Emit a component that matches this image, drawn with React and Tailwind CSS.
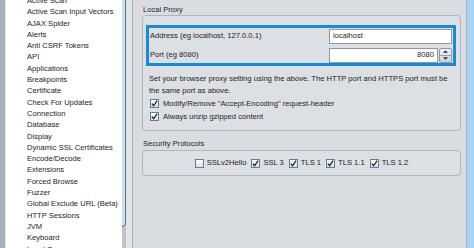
import React from "react";

const items = [
  "Active Scan",
  "Active Scan Input Vectors",
  "AJAX Spider",
  "Alerts",
  "Anti CSRF Tokens",
  "API",
  "Applications",
  "Breakpoints",
  "Certificate",
  "Check For Updates",
  "Connection",
  "Database",
  "Display",
  "Dynamic SSL Certificates",
  "Encode/Decode",
  "Extensions",
  "Forced Browse",
  "Fuzzer",
  "Global Exclude URL (Beta)",
  "HTTP Sessions",
  "JVM",
  "Keyboard",
  "Local Servers",
];

function Check({ on }) {
  return (
    <span className="w-[9px] h-[9px] border border-[#6f7b89] bg-linear-to-b from-[#ffffff] to-[#d9e0e8] flex items-center justify-center shrink-0">
      {on && (
        <svg viewBox="0 0 8 8" className="w-[7px] h-[7px]">
          <path d="M1 4.2 L3 6.6 L7 0.8" stroke="#10244a" strokeWidth="1.5" fill="none" />
        </svg>
      )}
    </span>
  );
}

function Spinner() {
  return (
    <div className="w-[13px] h-[15px] ml-[1px] border border-[#8e98a4] rounded-[2px] flex flex-col bg-linear-to-b from-[#f4f6f8] to-[#c9d0d8]">
      <div className="flex-1 flex items-center justify-center border-b border-[#9aa3ad]">
        <svg viewBox="0 0 6 3" className="w-[5px] h-[3px]"><path d="M0 3 L3 0 L6 3Z" fill="#2a3440" /></svg>
      </div>
      <div className="flex-1 flex items-center justify-center">
        <svg viewBox="0 0 6 3" className="w-[5px] h-[3px]"><path d="M0 0 L3 3 L6 0Z" fill="#2a3440" /></svg>
      </div>
    </div>
  );
}

export default function App() {
  return (
    <div className="w-[474px] h-[248px] overflow-hidden flex bg-[#d9dce1] text-[#1e1e1e] text-[7.6px] font-['Liberation_Sans',Arial,sans-serif]">
      {/* tree */}
      <div className="w-[6px] bg-[#a7b1bb] border-r border-[#e8ebee]" />
      <div className="w-[116px] bg-white overflow-hidden">
        <ul className="-mt-[5px] pl-[21px]">
          {items.map((t) => (
            <li key={t} className="leading-[11.3px] whitespace-nowrap">{t}</li>
          ))}
        </ul>
      </div>
      <div className="w-[4px] flex flex-col">
        <div className="h-[227px] bg-[#cfe1f0] border-r border-b border-[#5f7284] rounded-br-[4px]" />
        <div className="flex-1 bg-[#bfc4ca]" />
      </div>
      <div className="w-[7px] bg-[#e0e3e7] border-r border-[#a6acb3]" />

      {/* options panel */}
      <div className="flex-1 flex flex-col pl-[9px] pr-[4px] pt-[4px]">
        <div className="leading-[11px] pl-[1px]">Local Proxy</div>
        <div className="border border-[#b1b6bc] rounded-[4px] bg-[#dcdfe3] pt-[9px] pl-[3px] pr-[4px] pb-[9px]">
          <div className="border-[3px] border-[#1a8ad3] flex flex-col gap-[3px] pr-[1px]">
            <div className="h-[16px] flex items-center">
              <span className="w-[180px] pl-[1px]">Address (eg localhost, 127.0.0.1)</span>
              <div className="flex-1 h-[15px] bg-white border border-[#8e98a4] flex items-center px-[3px]">localhost</div>
            </div>
            <div className="h-[16px] flex items-center">
              <span className="w-[180px] pl-[1px]">Port (eg 8080)</span>
              <div className="flex-1 h-[15px] bg-white border border-[#8e98a4] flex items-center justify-end px-[3px]">8080</div>
              <Spinner />
            </div>
          </div>
          <p className="pl-[3px] mt-[7px] leading-[12px]">
            Set your browser proxy setting using the above. The HTTP port and HTTPS port must be
            <br />
            the same port as above.
          </p>
          <div className="flex flex-col gap-[4px] mt-[2px] pl-[4px]">
            <label className="flex items-center gap-[4px] leading-[9px]">
              <Check on /> Modify/Remove "Accept-Encoding" request-header
            </label>
            <label className="flex items-center gap-[4px] leading-[9px]">
              <Check on /> Always unzip gzipped content
            </label>
          </div>
        </div>

        <div className="leading-[11px] pl-[1px] mt-[7px]">Security Protocols</div>
        <div className="mt-[1px] border border-[#b1b6bc] rounded-[4px] bg-[#dcdfe3] h-[26px] flex items-center justify-center gap-[3px]">
          <Check /> <span className="mr-[2px]">SSLv2Hello</span>
          <Check on /> <span className="mr-[2px]">SSL 3</span>
          <Check on /> <span className="mr-[2px]">TLS 1</span>
          <Check on /> <span className="mr-[2px]">TLS 1.1</span>
          <Check on /> <span>TLS 1.2</span>
        </div>
      </div>

      {/* window edge */}
      <div className="w-[2px] bg-[#d9dce1] border-r border-[#a9afb6]" />
      <div className="w-[7px] bg-[#a9d3f3]" />
    </div>
  );
}
